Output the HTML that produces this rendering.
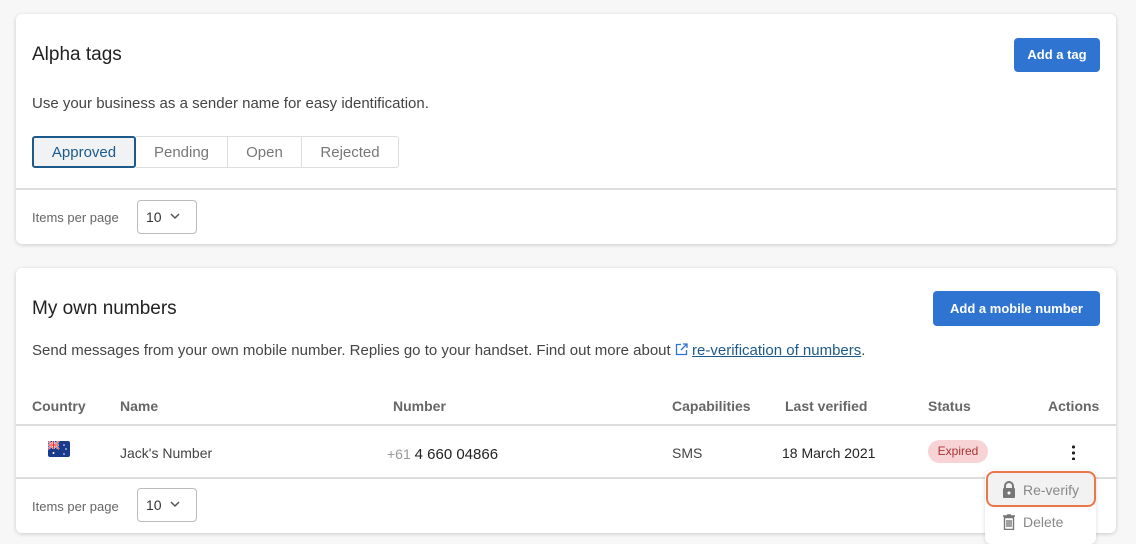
<!DOCTYPE html><html><head><style>
body{margin:0;background:#f7f7f7;font-family:"Liberation Sans",sans-serif;width:1136px;height:542px;overflow:hidden;position:relative;color:#333}
.card{position:absolute;left:16px;width:1100px;background:#fff;border-radius:6px;box-shadow:0 1px 4px rgba(0,0,0,.18)}
.abs{position:absolute;white-space:nowrap}
.btn{position:absolute;background:#2f74d0;color:#fff;font-weight:bold;font-size:14px;border-radius:4px;text-align:center}
.sel{position:absolute;width:60px;height:34px;border:1px solid #bbb;border-radius:4px;box-sizing:border-box;font-size:14px;line-height:32px;padding-left:8px;color:#333}
.sel svg{position:absolute;left:32px;top:12px}
.th{position:absolute;top:130px;font-size:14px;font-weight:bold;color:#666}
.td{position:absolute;top:177px;font-size:14px;color:#444}
</style></head><body>
<div class="card" style="top:14px;height:230px">
 <div class="abs" style="left:16px;top:30px;font-size:19px;color:#222">Alpha tags</div>
 <div class="btn" style="left:998px;top:24px;width:86px;height:34px;line-height:34px;font-size:13px">Add a tag</div>
 <div class="abs" style="left:16px;top:81px;font-size:15px;color:#444">Use your business as a sender name for easy identification.</div>
 <div class="abs" style="left:16px;top:122px;height:32px;display:flex;font-size:15px;color:#777">
  <div style="width:104px;border:2px solid #1c5a8c;border-radius:3px;background:#f0f2f4;color:#1c5a8c;text-align:center;line-height:30px;box-sizing:border-box">Approved</div>
  <div style="width:91px;border:1px solid #ddd;border-left:0;text-align:center;line-height:32px">Pending</div>
  <div style="width:73px;border:1px solid #ddd;border-left:0;text-align:center;line-height:32px">Open</div>
  <div style="width:96px;border:1px solid #ddd;border-left:0;border-radius:0 3px 3px 0;text-align:center;line-height:32px">Rejected</div>
 </div>
 <div class="abs" style="left:0;top:174px;width:1100px;height:2px;background:#ddd"></div>
 <div class="abs" style="left:16px;top:196px;font-size:13px;color:#666">Items per page</div>
 <div class="sel" style="left:121px;top:186px">10 <svg width="10" height="7" viewBox="0 0 10 7"><path d="M1 1l4 4 4-4" stroke="#555" stroke-width="1.5" fill="none"/></svg></div>
</div>
<div class="card" style="top:268px;height:265px">
 <div class="abs" style="left:16px;top:30px;font-size:19px;color:#222">My own numbers</div>
 <div class="btn" style="left:917px;top:23px;width:167px;height:35px;line-height:35px;font-size:13px">Add a mobile number</div>
 <div class="abs" style="left:16px;top:74px;font-size:15px;color:#444">Send messages from your own mobile number. Replies go to your handset. Find out more about <svg width="13" height="13" viewBox="0 0 13 13" style="vertical-align:-1px"><path d="M6 1.5H1.5v10h10V7M8 1h4v4M12 1L6 7" stroke="#2f74d0" stroke-width="1.3" fill="none"/></svg> <span style="color:#1c5a8c;text-decoration:underline">re-verification of numbers</span>.</div>
 <div class="th" style="left:16px">Country</div><div class="th" style="left:104px">Name</div><div class="th" style="left:377px">Number</div>
 <div class="th" style="left:656px">Capabilities</div><div class="th" style="left:769px">Last verified</div><div class="th" style="left:912px">Status</div><div class="th" style="left:1032px">Actions</div>
 <div class="abs" style="left:0;top:156px;width:1100px;height:2px;background:#ddd"></div>
 <svg class="abs" style="left:32px;top:173px" width="22" height="16" viewBox="0 0 22 16"><rect width="22" height="16" rx="2" fill="#1a3a8c"/><rect width="11" height="8" fill="#1a3a8c"/><path d="M0 0L11 8M11 0L0 8" stroke="#fff" stroke-width="2"/><path d="M0 0L11 8M11 0L0 8" stroke="#e33" stroke-width="0.8"/><path d="M5.5 0v8M0 4h11" stroke="#fff" stroke-width="2.5"/><path d="M5.5 0v8M0 4h11" stroke="#e33" stroke-width="1.3"/><circle cx="5.5" cy="12" r="1" fill="#fff"/><circle cx="16" cy="4" r=".8" fill="#fff"/><circle cx="18" cy="8" r=".8" fill="#fff"/><circle cx="16" cy="13" r=".8" fill="#fff"/></svg>
 <div class="td" style="left:104px">Jack's Number</div>
 <div class="td" style="left:371px;top:178px"><span style="color:#999">+61</span> <span style="color:#222;font-size:15px">4 660 04866</span></div>
 <div class="td" style="left:656px">SMS</div>
 <div class="td" style="left:766px;color:#222">18 March 2021</div>
 <div class="abs" style="left:912px;top:172px;width:60px;height:23px;background:#f8d3d6;border-radius:12px;color:#a33;font-size:12px;text-align:center;line-height:23px">Expired</div>
 <div class="abs" style="left:1056px;top:176px;width:3px;height:16px;background:radial-gradient(circle,#222 1.5px,transparent 1.6px) 0 0/3px 6px"></div>
 <div class="abs" style="left:0;top:209px;width:1100px;height:2px;background:#ddd"></div>
 <div class="abs" style="left:16px;top:231px;font-size:13px;color:#666">Items per page</div>
 <div class="sel" style="left:121px;top:220px">10 <svg width="10" height="7" viewBox="0 0 10 7"><path d="M1 1l4 4 4-4" stroke="#555" stroke-width="1.5" fill="none"/></svg></div>
</div>
<div class="abs" style="left:985px;top:470px;width:111px;height:74px;background:#fff;border-radius:6px;box-shadow:0 1px 4px rgba(0,0,0,.15)"></div>
<div class="abs" style="left:986px;top:471px;width:110px;height:36px;border:2px solid #e8784a;border-radius:8px;background:#f2f2f2;box-sizing:border-box"></div>
<svg class="abs" style="left:1002px;top:481px" width="14" height="17" viewBox="0 0 14 17"><path d="M3 7V5a4 4 0 0 1 8 0v2" stroke="#777" stroke-width="2" fill="none"/><rect x="1" y="7" width="12" height="10" rx="1" fill="#777"/><circle cx="7" cy="12" r="1.5" fill="#fff"/></svg>
<div class="abs" style="left:1023px;top:482px;font-size:14px;color:#888">Re-verify</div>
<svg class="abs" style="left:1003px;top:514px" width="12" height="16" viewBox="0 0 12 16"><path d="M0 2h12M4 1h4M1.5 3.5h9v12h-9z M4 6v7M6 6v7M8 6v7" stroke="#777" stroke-width="1.4" fill="none"/></svg>
<div class="abs" style="left:1023px;top:514px;font-size:14px;color:#888">Delete</div>
</body></html>
